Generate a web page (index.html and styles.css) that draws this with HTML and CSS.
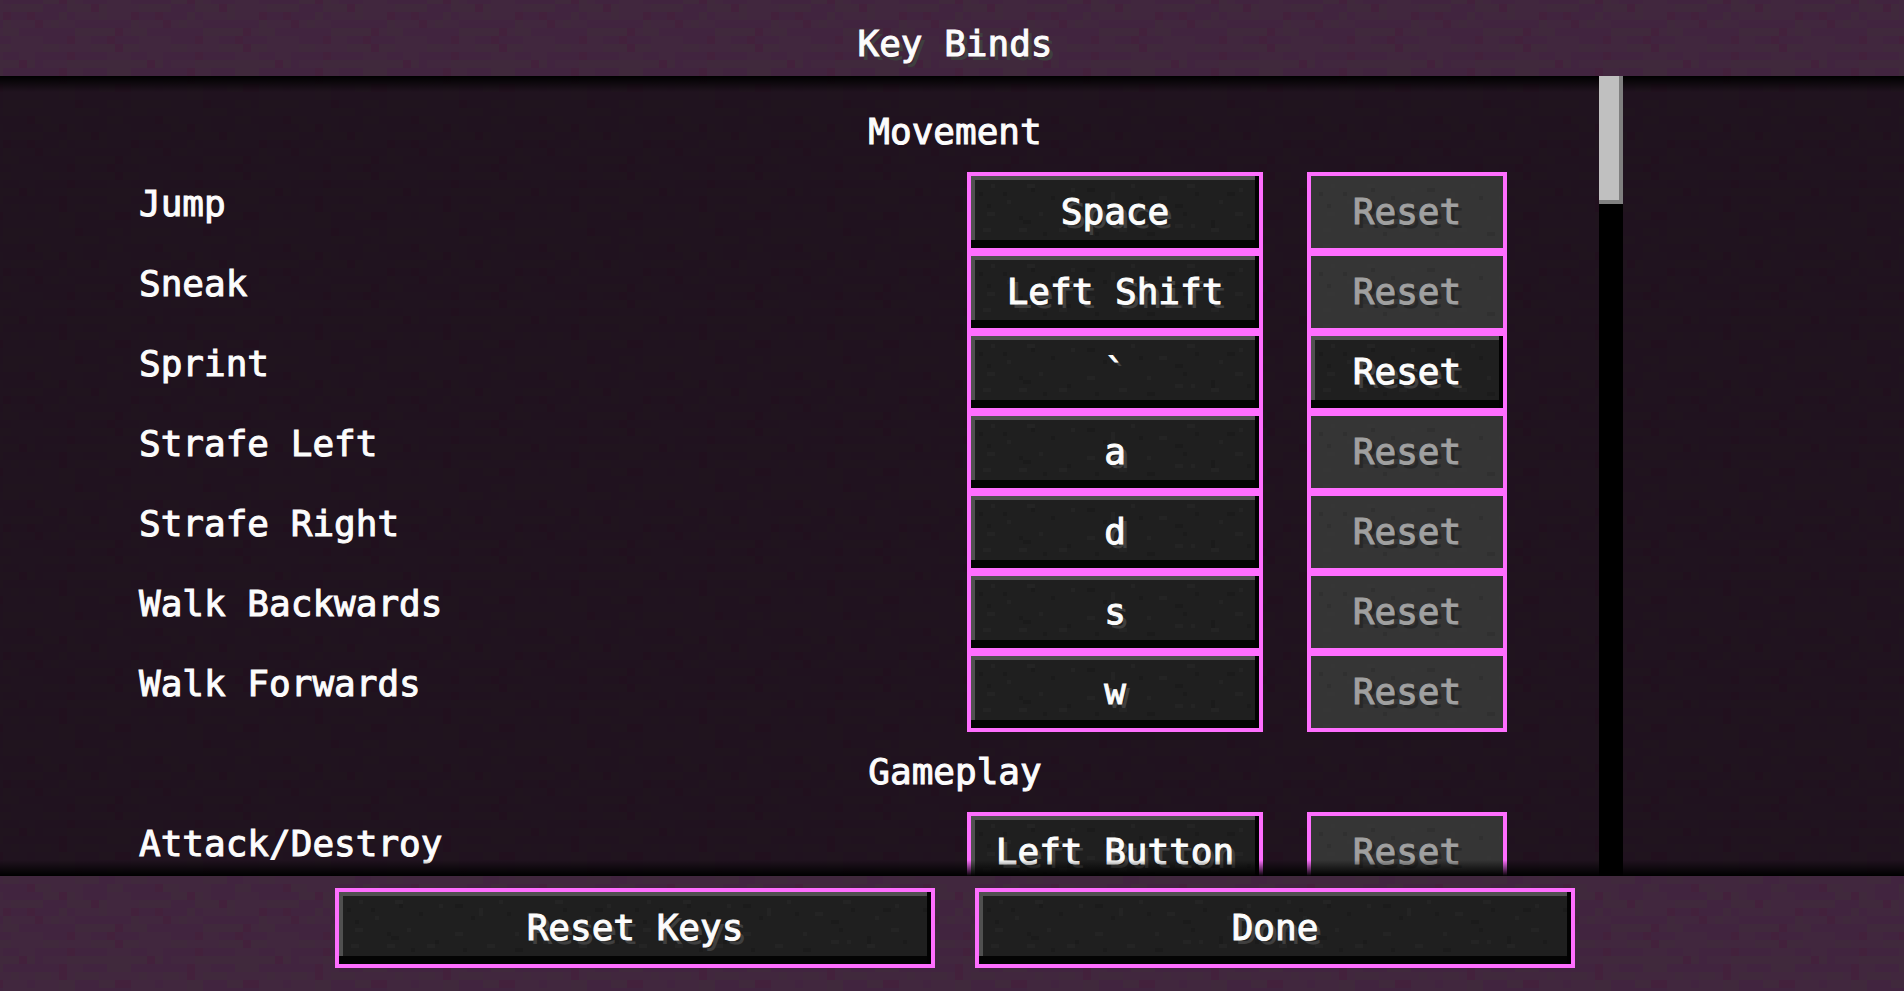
FILE: index.html
```html
<!DOCTYPE html>
<html lang="en">
<head>
<meta charset="utf-8">
<meta name="viewport" content="width=device-width, initial-scale=1">
<title>Key Binds</title>
<link rel="stylesheet" href="styles.css">
</head>
<body class="screen">
<header class="screen-header"><h1 class="title">Key Binds</h1></header>
<main class="list-frame">
  <div class="list">
    <section class="group">
      <h2 class="group-title">Movement</h2>
      <div class="bind"><span class="bind-name" id="jump">Jump</span><button class="btn" aria-describedby="jump">Space</button><button class="btn" disabled>Reset</button></div>
      <div class="bind"><span class="bind-name" id="sneak">Sneak</span><button class="btn" aria-describedby="sneak">Left Shift</button><button class="btn" disabled>Reset</button></div>
      <div class="bind"><span class="bind-name" id="sprint">Sprint</span><button class="btn" aria-describedby="sprint">`</button><button class="btn">Reset</button></div>
      <div class="bind"><span class="bind-name" id="left">Strafe Left</span><button class="btn" aria-describedby="left">a</button><button class="btn" disabled>Reset</button></div>
      <div class="bind"><span class="bind-name" id="right">Strafe Right</span><button class="btn" aria-describedby="right">d</button><button class="btn" disabled>Reset</button></div>
      <div class="bind"><span class="bind-name" id="back">Walk Backwards</span><button class="btn" aria-describedby="back">s</button><button class="btn" disabled>Reset</button></div>
      <div class="bind"><span class="bind-name" id="forward">Walk Forwards</span><button class="btn" aria-describedby="forward">w</button><button class="btn" disabled>Reset</button></div>
    </section>
    <section class="group">
      <h2 class="group-title">Gameplay</h2>
      <div class="bind"><span class="bind-name" id="attack">Attack/Destroy</span><button class="btn" aria-describedby="attack">Left Button</button><button class="btn" disabled>Reset</button></div>
    </section>
  </div>
  <div class="scrollbar"><div class="scrollbar-thumb"></div></div>
</main>
<footer class="screen-footer">
  <button class="btn">Reset Keys</button>
  <button class="btn">Done</button>
</footer>
</body>
</html>
```
FILE: styles.css
```css
* { box-sizing: border-box; }

.screen {
  --tile: url("data:image/svg+xml,%3Csvg xmlns='http://www.w3.org/2000/svg' viewBox='0 0 16 16' width='128' height='128' shape-rendering='crispEdges'%3E%3Cpath fill='%2341243f' d='M0 0h16v16H0z'/%3E%3Cpath fill='%2341273e' d='M2 0h7v1H2zM14 0h2v1h-2zM6 1h4v1H6zM9 2h1v1H9zM13 2h3v1h-3zM0 3h1v1H0zM13 3h3v1h-3zM9 4h7v1H9zM1 5h8v1H1zM15 6h1v1h-1zM1 7h4v1H1zM9 7h2v1H9zM1 8h10v1H1zM2 9h2v1H2zM13 9h3v1h-3zM5 10h3v1H5zM8 11h2v1H8zM0 12h16v1H0zM0 13h3v1H0zM4 13h3v1H4zM0 14h7v1H0zM5 15h4v1H5z'/%3E%3Cpath fill='%2340293c' d='M0 0h2v1H0zM9 0h3v1H9zM4 1h2v1H4zM13 1h2v1h-2zM5 2h2v1H5zM8 2h1v1H8zM1 3h4v1H1zM8 3h3v1H8zM12 3h1v1h-1zM7 4h1v1H7zM12 4h1v1h-1zM0 5h1v1H0zM6 5h1v1H6zM0 6h2v1H0zM9 6h5v1H9zM0 8h1v1H0zM5 8h2v1H5zM11 8h3v1h-3zM15 8h1v1h-1zM0 10h2v1H0zM3 10h1v1H3zM8 10h8v1H8zM13 11h3v1h-3zM1 12h1v1H1zM4 12h2v1H4zM9 12h3v1H9zM7 13h2v2H7zM12 13h2v1h-2zM0 15h5v1H0zM13 15h2v1h-2z'/%3E%3Cpath fill='%2343213c' d='M3 1h1v1H3zM7 2h1v1H7zM11 3h1v1h-1zM0 4h1v1H0zM3 4h1v1H3zM4 5h1v1H4zM14 6h1v1h-1zM8 7h1v1H8zM13 7h1v1h-1zM14 8h1v1h-1zM8 9h1v1H8zM2 10h1v1H2zM7 11h1v2H7zM14 13h2v1h-2zM9 15h1v1H9z'/%3E%3C/svg%3E");
  --grain: url("data:image/svg+xml,%3Csvg xmlns='http://www.w3.org/2000/svg' viewBox='0 0 72 18' width='288' height='72' shape-rendering='crispEdges'%3E%3Cpath fill='white' fill-opacity='.025' d='M5 2h1v1H5zM14 2h2v1h-2zM25 3h1v1h-1zM40 2h1v1h-1zM54 2h2v1h-2zM67 3h1v1h-1zM4 9h2v1H4zM9 6h1v1H9zM29 10h2v1h-2zM17 9h1v1h-1zM12 13h2v1h-2zM3 13h2v1H3zM22 13h2v1h-2zM37 13h2v1h-2zM51 12h2v1h-2zM55 12h1v1h-1zM60 13h2v1h-2zM62 6h1v1h-1zM47 5h2v1h-2zM35 4h1v2h-1zM66 9h2v1h-2zM44 10h1v1h-1zM3 17h2v1H3zM34 16h2v1h-2zM58 17h1v1h-1z'/%3E%3Cpath fill='black' fill-opacity='.12' d='M2 4h1v1H2zM8 4h1v1H8zM15 3h1v1h-1zM12 10h1v1h-1zM13 11h2v1h-2zM20 5h1v1h-1zM29 3h2v1h-2zM33 6h1v1h-1zM51 7h2v1h-2zM53 9h1v1h-1zM60 11h1v2h-1zM56 4h1v1h-1zM64 4h2v1h-2zM4 7h1v1H4zM24 12h1v1h-1zM42 5h1v1h-1zM44 14h2v1h-2zM69 12h1v1h-1zM31 14h1v1h-1zM18 14h1v1h-1z'/%3E%3C/svg%3E");
  margin: 0;
  height: 100vh;
  display: flex;
  flex-direction: column;
  overflow: hidden;
  color: #fcfcfc;
  font: 36px/40px "DejaVu Sans Mono", monospace;
  -webkit-text-stroke: 1px;
  background: #41263e var(--tile) 3px -20px;
}

.screen-header {
  padding: 24px 0 12px 6px;
  text-align: center;
}

.title,
.group-title {
  margin: 0;
  font: inherit;
}

.title { text-shadow: 4px 4px #3f3f3f; }

.list-frame {
  position: relative;
  flex: 1;
  min-height: 0;
  overflow: hidden;
  padding: 16px 0 0 6px;
  background: rgba(0, 0, 0, .5);
}

.list-frame::before,
.list-frame::after {
  content: "";
  position: absolute;
  left: 0;
  right: 0;
  height: 16px;
  z-index: 1;
}

.list-frame::before { top: 0; background: linear-gradient(#000, transparent); }
.list-frame::after { bottom: 0; background: linear-gradient(transparent, #000); }

.list {
  max-width: 1632px;
  margin: 0 auto;
}

.group-title {
  padding: 20px 0;
  text-align: center;
}

.bind {
  display: grid;
  grid-template-columns: 1fr 296px 200px;
  column-gap: 44px;
  padding-right: 264px;
}

.bind-name { padding: 12px 0 28px; }

.btn {
  height: 80px;
  padding: 0;
  border: 4px solid #ff6eff;
  border-radius: 0;
  color: #fcfcfc;
  font: inherit;
  text-shadow: 4px 4px #3f3f3f;
  background: #1f1f1f var(--grain);
  box-shadow: inset -4px 0 #020202, inset 0 -8px #040404, inset 0 4px #505050, inset 4px 0 #505050;
}

.btn:disabled {
  color: #a0a0a0;
  text-shadow: 4px 4px #282828;
  background-color: #353535;
  background-blend-mode: soft-light;
  box-shadow: none;
}

.scrollbar {
  position: absolute;
  z-index: 2;
  top: 0;
  bottom: 0;
  left: calc(50% + 647px);
  width: 24px;
  background: #000;
}

.scrollbar-thumb {
  height: 128px;
  background: #c0c0c0;
  box-shadow: inset -4px -4px #808080;
}

.screen-footer {
  display: grid;
  grid-template-columns: repeat(2, minmax(0, 600px));
  justify-content: center;
  column-gap: 40px;
  padding: 12px 0 23px 6px;
}
```
